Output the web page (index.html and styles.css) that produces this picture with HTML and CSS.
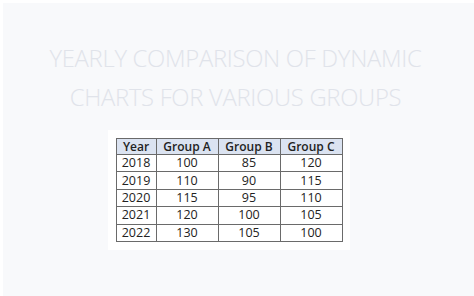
FILE: index.html
```html
<!DOCTYPE html>
<html lang="en">
<head>
<meta charset="utf-8">
<title>Yearly Comparison of Dynamic Charts for Various Groups</title>
<link rel="stylesheet" href="styles.css">
</head>
<body>
<main class="page">
  <h1 class="title">YEARLY COMPARISON OF DYNAMIC<br>CHARTS FOR VARIOUS GROUPS</h1>
  <section class="card">
    <table class="data">
      <colgroup>
        <col class="c-year"><col class="c-grp"><col class="c-grp"><col class="c-grp">
      </colgroup>
      <thead>
        <tr><th>Year</th><th>Group A</th><th>Group B</th><th>Group C</th></tr>
      </thead>
      <tbody>
        <tr><td>2018</td><td>100</td><td>85</td><td>120</td></tr>
        <tr><td>2019</td><td>110</td><td>90</td><td>115</td></tr>
        <tr><td>2020</td><td>115</td><td>95</td><td>110</td></tr>
        <tr><td>2021</td><td>120</td><td>100</td><td>105</td></tr>
        <tr><td>2022</td><td>130</td><td>105</td><td>100</td></tr>
      </tbody>
    </table>
  </section>
</main>
</body>
</html>
```
FILE: styles.css
```css
html, body {
  margin: 0;
  padding: 0;
  background: #ffffff;
}
.page {
  box-sizing: border-box;
  width: 471px;
  height: 293px;
  margin: 3px 0 0 3px;
  background: #f8f9fb;
  display: flex;
  flex-direction: column;
  align-items: center;
  padding-top: 36px;
}
.title {
  margin: 0 0 0 -6px;
  font-family: "Open Sans", "Noto Sans", sans-serif;
  font-weight: 300;
  font-size: 23.8px;
  line-height: 39px;
  color: #e0e3ea;
  text-align: center;
  letter-spacing: -0.28px;
}
.card {
  margin-top: 13px;
  margin-right: 20px;
  background: #ffffff;
  padding: 8px 7px 8px 8px;
}
.data {
  border-collapse: collapse;
  border: 1px solid #6a6a6a;
  font-family: "Open Sans", "Noto Sans", sans-serif;
  font-size: 12.5px;
  color: #222222;
  table-layout: fixed;
  width: 226px;
}
.c-year { width: 40px; }
.c-grp { width: 62px; }
.data th, .data td {
  border: 1px solid #6a6a6a;
  padding: 0;
  text-align: center;
  line-height: 14px;
}
.data th {
  background: #dbe3f1;
  font-weight: 600;
  font-size: 12px;
  height: 15px;
}
.data td {
  height: 16.4px;
}
```
